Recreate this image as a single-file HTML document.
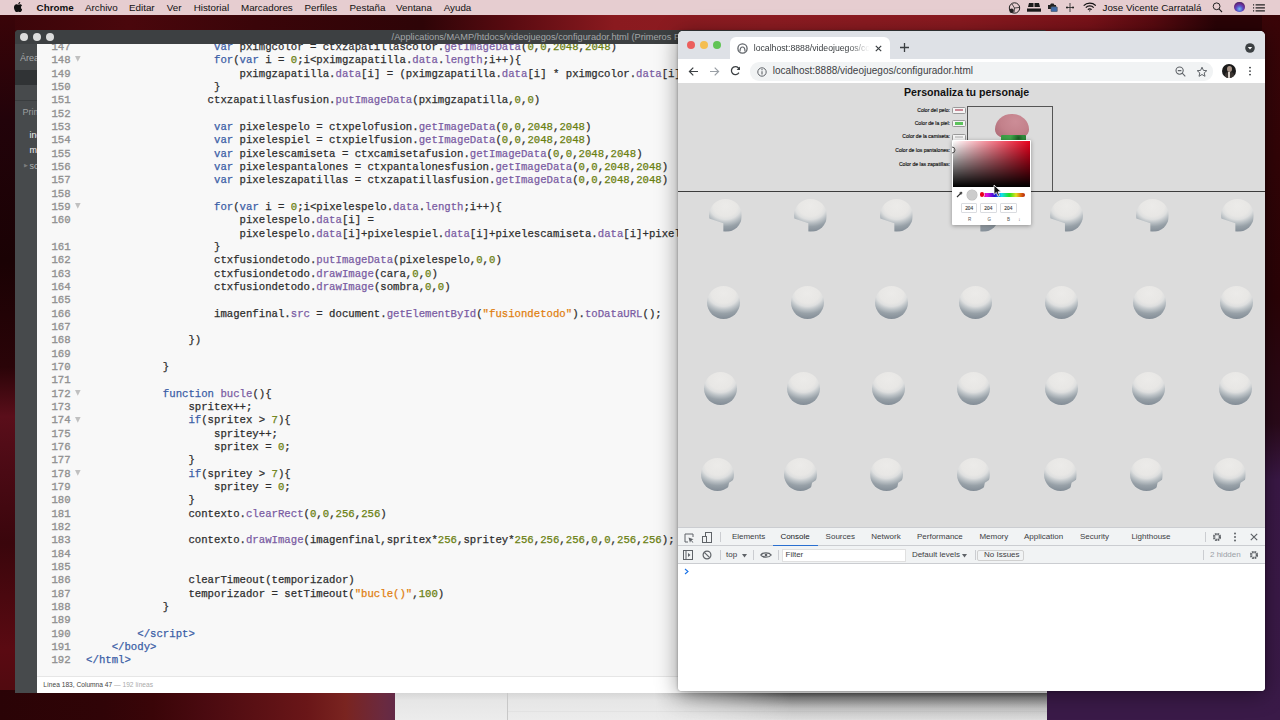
<!DOCTYPE html>
<html><head><meta charset="utf-8">
<style>
*{margin:0;padding:0;box-sizing:border-box}
html,body{width:1280px;height:720px;overflow:hidden;position:relative;font-family:"Liberation Sans",sans-serif}
body{background:#2a0306}
#desk-top{left:0;top:14px;width:1280px;height:17px;background:linear-gradient(90deg,#3a0509 0%,#4a070c 10%,#3a0509 20%,#2e0407 33%,#5a0b11 40%,#8a1a1f 48%,#8e1c22 60%,#8a1a20 75%,#7a1219 85%,#5a0a10 90%,#2a0306 95%,#2a0306 100%)}
#desk-left{left:0;top:14px;width:15px;height:706px;background:linear-gradient(180deg,#3a0408 0%,#22030a 15%,#1a0204 35%,#2a0408 50%,#5a0e1a 57%,#4a0a14 65%,#3a060c 75%,#5a0a12 90%,#4a0a0e 100%)}
.abs{position:absolute}
#desk-bottom{left:0;top:690px;width:1280px;height:30px;background:linear-gradient(90deg,#2a0306 0%,#300407 8%,#3a0508 12%,#4a0a10 16%,#5a1014 20%,#6a1618 24%,#7a2420 27%,#6a2a40 30%,#5a2a50 32%,#3a1a48 82%,#3a1a48 100%)}
#desk-right{left:1262px;top:14px;width:18px;height:706px;background:linear-gradient(180deg,#3a0508 0%,#2a0306 40%,#2a0a1a 58%,#3a1846 66%,#3a1a48 100%)}
#menubar{left:0;top:0;width:1280px;height:14.5px;background:#e6cdd0;font-size:9.8px;color:#111}
#menubar span{position:absolute;top:1.5px;white-space:nowrap}
/* editor */
#editor{left:15px;top:30px;width:1032px;height:663px;background:#46494b;border-radius:4px 4px 0 0;overflow:hidden}
#ed-title{left:0;top:0;width:1032px;height:14px;background:#3d4042}
.tl{position:absolute;width:8px;height:8px;border-radius:50%;background:#dcdcdc;top:3px}
#ed-side{left:0;top:14px;width:22px;height:649px;background:#474a4c}
#ed-code{left:22px;top:14px;width:1010px;height:632px;background:#f8f8f8;overflow:hidden}
#ed-status{left:22px;top:646px;width:1010px;height:17px;background:#fff;border-top:1px solid #e6e6e6}
#code{position:absolute;left:49.1px;top:-2.93px;font-family:"Liberation Mono",monospace;font-size:10.667px;line-height:13.333px;color:#2e2e2e;white-space:pre;-webkit-text-stroke:.25px}
#lnums{position:absolute;left:0;top:-2.93px;width:33.6px;text-align:right;font-family:"Liberation Mono",monospace;font-size:10.67px;line-height:13.333px;color:#929292;white-space:pre;-webkit-text-stroke:.35px}
i{font-style:normal}
.k{color:#3b5ea6}.p{color:#7a5ca3}.n{color:#6a8010}.s{color:#e08010}
/* browser */
#browser{left:678px;top:31px;width:587px;height:659.5px;background:#fff;border-radius:5px 5px 4px 4px;overflow:hidden;box-shadow:0 3px 22px rgba(0,0,0,.42),0 0 3px rgba(0,0,0,.35)}
#tabstrip{left:0;top:0;width:587px;height:27.5px;background:#dee1e6}
#tab{left:52px;top:6px;width:160px;height:22px;background:#fff;border-radius:6px 6px 0 0}
#toolbar{left:0;top:27.5px;width:587px;height:24.5px;background:#fff}
#omni{left:72px;top:3.5px;width:463px;height:18.5px;background:#f1f3f4;border-radius:9px}
#page{left:0;top:52px;width:587px;height:444.5px;background:#dcdcdc;overflow:hidden}
#devtools{left:0;top:496px;width:587px;height:163.5px;background:#fff;border-top:1px solid #cbcdd1}
#dt-tabs{left:0;top:0;width:587px;height:18.3px;background:#f1f3f4;border-bottom:1px solid #cbcdd1;font-size:8.5px;color:#333}
#dt-bar{left:0;top:18.3px;width:587px;height:17.3px;background:#f1f3f4;border-bottom:1px solid #cbcdd1;font-size:8.5px;color:#333}
.sph{position:absolute;width:33px;height:33px;border-radius:50%;background:radial-gradient(ellipse 95% 80% at 50% 22%,#ecebe9 0%,#e8e7e5 38%,#dedfdf 50%,#bcc2c6 62%,#98a1a8 77%,#808a94 100%)}

.lbl{position:absolute;right:315px;font-size:5.08px;line-height:7px;color:#111;white-space:nowrap;-webkit-text-stroke:.15px #111}
.sw{position:absolute;left:274px;width:14px;height:7px;background:#f4f4f4;border:1px solid #999;border-radius:1.5px;padding:1.2px 1.6px}
.sw i{display:block;width:100%;height:100%}
#picker{left:273.8px;top:57.4px;width:79.2px;height:84.6px;background:#fff;box-shadow:0 1px 4px rgba(0,0,0,.35);border-radius:1px}
.rgb{position:absolute;top:62.6px;width:16.7px;height:10px;border:1px solid #dadce0;border-radius:1px;font-size:4.8px;line-height:8px;padding-top:.6px;text-align:center;color:#333;-webkit-text-stroke:.1px #333}
.rl{position:absolute;top:76.3px;font-size:4.5px;color:#555}
.dtt{position:absolute;top:3.8px;font-size:8px;line-height:9px;color:#3c4043;white-space:nowrap}
.s1{clip-path:polygon(0 0,100% 0,100% 100%,45% 100%,45% 75%,0 60%)}
.s4{clip-path:polygon(0 0,100% 0,100% 65%,85% 75%,80% 100%,0 100%)}
#third{left:395px;top:690px;width:652px;height:30px;background:linear-gradient(180deg,#d0d0d0 0%,#e6e6e6 35%,#ececec 100%);overflow:hidden}
</style></head><body>
<div id="desk-top" class="abs"></div>
<div id="desk-left" class="abs"></div>
<div id="desk-bottom" class="abs"></div>
<div id="desk-right" class="abs"></div>
<div id="third" class="abs">
 <div class="abs" style="left:112px;top:0;width:1px;height:30px;background:#c8c8c8"></div>
 <div class="abs" style="left:113px;top:20.6px;width:540px;height:1px;background:#e2e2e2"></div>
 <div class="abs" style="left:260px;top:0;width:392px;height:30px;background:linear-gradient(180deg,rgba(40,40,40,.85) 0%,rgba(80,80,80,.6) 25%,rgba(110,110,110,.3) 60%,rgba(120,120,120,.12) 100%);-webkit-mask-image:linear-gradient(90deg,transparent 0%,#000 35%)"></div>
</div>

<div id="menubar" class="abs">
<svg class="abs" style="left:13.9px;top:1.8px" width="8.5" height="10" viewBox="0 0 170 200"><path fill="#111" d="M140 106c0-26 21-38 22-39-12-18-31-20-37-20-16-2-31 9-39 9-8 0-20-9-34-9C34 48 17 58 8 74c-18 32-5 79 13 105 9 13 19 27 32 26 13-1 18-8 33-8s20 8 33 8c14 0 23-13 31-26 10-15 14-29 14-30-1 0-24-9-24-43zM115 30c7-9 12-21 11-33-10 1-23 7-30 16-7 8-13 20-11 32 11 1 23-6 30-15z"/></svg>
<span style="left:36.6px;font-weight:bold">Chrome</span>
<span style="left:85px">Archivo</span>
<span style="left:129px">Editar</span>
<span style="left:166.7px">Ver</span>
<span style="left:193.7px">Historial</span>
<span style="left:241px">Marcadores</span>
<span style="left:304.5px">Perfiles</span>
<span style="left:349.5px">Pestaña</span>
<span style="left:396px">Ventana</span>
<span style="left:443.7px">Ayuda</span>
<span style="left:1102.5px">Jose Vicente Carratalá</span>
<svg class="abs" style="left:1008px;top:1.5px" width="13" height="12" viewBox="0 0 13 12"><circle cx="6.5" cy="6" r="5.2" fill="none" stroke="#222" stroke-width="1"/><circle cx="3.6" cy="8.8" r="2.2" fill="#222"/><path d="M6.5 6L4 2M6.5 6L11 5.5M6.5 6L6 10.5" stroke="#222" stroke-width=".8"/></svg>
<svg class="abs" style="left:1027.3px;top:3px" width="14" height="9" viewBox="0 0 14 9"><path d="M2 0H6.5V4H1ZM7.5 0H12L13 4H7.5Z" fill="#1a1a1a"/><rect x="0" y="5.5" width="14" height="3.2" fill="#1a1a1a"/></svg>
<svg class="abs" style="left:1047px;top:2.3px" width="10.5" height="10" viewBox="0 0 10.5 10"><path d="M1 3H3L4 1.5H6.5L7.5 3H9V7H1Z" fill="#222"/><rect x="4" y="4.8" width="6.3" height="5" rx=".8" fill="#3f6aa8" stroke="#555" stroke-width=".6"/></svg>
<svg class="abs" style="left:1066px;top:3px" width="8" height="9" viewBox="0 0 8 9"><path d="M4 0V9M0 4.5H8" stroke="#333" stroke-width=".9"/><circle cx="1" cy="4.5" r="1" fill="#222"/><circle cx="7" cy="4.5" r="1" fill="#222"/></svg>
<svg class="abs" style="left:1082.8px;top:2px" width="13.5" height="10" viewBox="0 0 13.5 10"><path d="M.7 3.6A8.5 8.5 0 0 1 12.8 3.6" fill="none" stroke="#111" stroke-width="1.3"/><path d="M2.8 5.6A5.5 5.5 0 0 1 10.7 5.6" fill="none" stroke="#111" stroke-width="1.3"/><path d="M4.9 7.6A2.6 2.6 0 0 1 8.6 7.6" fill="none" stroke="#111" stroke-width="1.3"/><path d="M5.8 8.6L6.75 9.8L7.7 8.6Z" fill="#111"/></svg>
<svg class="abs" style="left:1212px;top:2.3px" width="11" height="11" viewBox="0 0 11 11"><circle cx="4.6" cy="4.3" r="3.4" fill="none" stroke="#222" stroke-width="1"/><path d="M7 6.8L10 10" stroke="#222" stroke-width="1.1"/></svg>
<div class="abs" style="left:1234px;top:1.9px;width:10.6px;height:10.6px;border-radius:50%;background:radial-gradient(circle at 50% 70%,#6ac0f0 0,#5a50c8 35%,#6a2a8a 60%,#1a1a40 100%)"></div>
<svg class="abs" style="left:1252.8px;top:3.5px" width="12" height="8" viewBox="0 0 12 8"><path d="M0 .9H1.1M0 3.9H1.1M0 6.9H1.1" stroke="#222" stroke-width="1.1"/><path d="M2.6 .9H11.9M2.6 3.9H11.9M2.6 6.9H11.9" stroke="#222" stroke-width="1.1"/></svg>

</div>

<div id="editor" class="abs">
 <div id="ed-title" class="abs">
  <div class="tl" style="left:4.8px"></div><div class="tl" style="left:18px"></div><div class="tl" style="left:31px"></div>
  <span class="abs" style="left:376.6px;top:2px;font-size:9.22px;color:#a3a6a8;white-space:nowrap">/Applications/MAMP/htdocs/videojuegos/configurador.html (Primeros P</span>
 </div>
 <div id="ed-side" class="abs" style="overflow:hidden">
  <span class="abs" style="left:4.9px;top:9px;font-size:9px;color:#a8aaab;white-space:nowrap">Área de trabajo</span>
  <div class="abs" style="left:0;top:26.2px;width:22px;height:14.6px;background:#303335"></div>
  <div class="abs" style="left:0;top:55.8px;width:22px;height:1px;background:#3a3d3f"></div>
  <span class="abs" style="left:7.6px;top:62.5px;font-size:9px;color:#9c9e9f;white-space:nowrap">Primeros pasos</span>
  <span class="abs" style="left:14.5px;top:85.5px;font-size:9px;color:#f2f2f2;white-space:nowrap">index.html</span>
  <span class="abs" style="left:14.5px;top:100.8px;font-size:9px;color:#f2f2f2;white-space:nowrap">main.css</span>
  <span class="abs" style="left:8.5px;top:118px;font-size:5px;color:#7a7c7d">&#9654;</span>
  <span class="abs" style="left:14.5px;top:116.5px;font-size:9px;color:#b0b2b3;white-space:nowrap">scripts</span>
 </div>
 <div id="ed-code" class="abs">
  <div id="lnums">147
148
149
150
151
152
153
154
155
156
157
158
159
160

161
162
163
164
165
166
167
168
169
170
171
172
173
174
175
176
177
178
179
180
181
182
183
184
185
186
187
188
189
190
191
192</div>
  <svg class="abs" style="left:37.7px;top:12.40px" width="6" height="6" viewBox="0 0 6 6"><path d="M0 0H5.6L2.8 5.8Z" fill="#c0c0c0"/></svg><svg class="abs" style="left:37.7px;top:159.14px" width="6" height="6" viewBox="0 0 6 6"><path d="M0 0H5.6L2.8 5.8Z" fill="#c0c0c0"/></svg><svg class="abs" style="left:37.7px;top:345.90px" width="6" height="6" viewBox="0 0 6 6"><path d="M0 0H5.6L2.8 5.8Z" fill="#c0c0c0"/></svg><svg class="abs" style="left:37.7px;top:372.58px" width="6" height="6" viewBox="0 0 6 6"><path d="M0 0H5.6L2.8 5.8Z" fill="#c0c0c0"/></svg><svg class="abs" style="left:37.7px;top:425.94px" width="6" height="6" viewBox="0 0 6 6"><path d="M0 0H5.6L2.8 5.8Z" fill="#c0c0c0"/></svg>
  <div id="code">                    <i class="k">var</i> pximgcolor = ctxzapatillascolor.<i class="p">getImageData</i>(<i class="n">0</i>,<i class="n">0</i>,<i class="n">2048</i>,<i class="n">2048</i>)
                    <i class="k">for</i>(<i class="k">var</i> i = <i class="n">0</i>;i&lt;pximgzapatilla.<i class="p">data</i>.<i class="p">length</i>;i++){
                        pximgzapatilla.<i class="p">data</i>[i] = (pximgzapatilla.<i class="p">data</i>[i] * pximgcolor.<i class="p">data</i>[i])/<i class="n">255</i>;
                    }
                   ctxzapatillasfusion.<i class="p">putImageData</i>(pximgzapatilla,<i class="n">0</i>,<i class="n">0</i>)

                    <i class="k">var</i> pixelespelo = ctxpelofusion.<i class="p">getImageData</i>(<i class="n">0</i>,<i class="n">0</i>,<i class="n">2048</i>,<i class="n">2048</i>)
                    <i class="k">var</i> pixelespiel = ctxpielfusion.<i class="p">getImageData</i>(<i class="n">0</i>,<i class="n">0</i>,<i class="n">2048</i>,<i class="n">2048</i>)
                    <i class="k">var</i> pixelescamiseta = ctxcamisetafusion.<i class="p">getImageData</i>(<i class="n">0</i>,<i class="n">0</i>,<i class="n">2048</i>,<i class="n">2048</i>)
                    <i class="k">var</i> pixelespantalones = ctxpantalonesfusion.<i class="p">getImageData</i>(<i class="n">0</i>,<i class="n">0</i>,<i class="n">2048</i>,<i class="n">2048</i>)
                    <i class="k">var</i> pixeleszapatillas = ctxzapatillasfusion.<i class="p">getImageData</i>(<i class="n">0</i>,<i class="n">0</i>,<i class="n">2048</i>,<i class="n">2048</i>)

                    <i class="k">for</i>(<i class="k">var</i> i = <i class="n">0</i>;i&lt;pixelespelo.<i class="p">data</i>.<i class="p">length</i>;i++){
                        pixelespelo.<i class="p">data</i>[i] =
                        pixelespelo.<i class="p">data</i>[i]+pixelespiel.<i class="p">data</i>[i]+pixelescamiseta.<i class="p">data</i>[i]+pixelespantalones.<i class="p">data</i>[i]
                    }
                    ctxfusiondetodo.<i class="p">putImageData</i>(pixelespelo,<i class="n">0</i>,<i class="n">0</i>)
                    ctxfusiondetodo.<i class="p">drawImage</i>(cara,<i class="n">0</i>,<i class="n">0</i>)
                    ctxfusiondetodo.<i class="p">drawImage</i>(sombra,<i class="n">0</i>,<i class="n">0</i>)

                    imagenfinal.<i class="p">src</i> = document.<i class="p">getElementById</i>(<i class="s">&quot;fusiondetodo&quot;</i>).<i class="p">toDataURL</i>();

                })

            }

            <i class="k">function</i> <i class="p">bucle</i>(){
                spritex++;
                <i class="k">if</i>(spritex &gt; <i class="n">7</i>){
                    spritey++;
                    spritex = <i class="n">0</i>;
                }
                <i class="k">if</i>(spritey &gt; <i class="n">7</i>){
                    spritey = <i class="n">0</i>;
                }
                contexto.<i class="p">clearRect</i>(<i class="n">0</i>,<i class="n">0</i>,<i class="n">256</i>,<i class="n">256</i>)

                contexto.<i class="p">drawImage</i>(imagenfinal,spritex*<i class="n">256</i>,spritey*<i class="n">256</i>,<i class="n">256</i>,<i class="n">256</i>,<i class="n">0</i>,<i class="n">0</i>,<i class="n">256</i>,<i class="n">256</i>);


                clearTimeout(temporizador)
                temporizador = setTimeout(<i class="s">&quot;bucle()&quot;</i>,<i class="n">100</i>)
            }

        <i class="k">&lt;/script&gt;</i>
    <i class="k">&lt;/body&gt;</i>
<i class="k">&lt;/html&gt;</i></div>
 </div>
 <div id="ed-status" class="abs"><span class="abs" style="left:6.3px;top:3.5px;font-size:6.64px;color:#444;white-space:nowrap">Línea 183, Columna 47 <span style="color:#aaa">— 192 líneas</span></span></div>
</div>

<div id="browser" class="abs">
 <div id="tabstrip" class="abs">
  <div class="tl" style="left:8.8px;top:10px;background:#ec5f5d"></div>
  <div class="tl" style="left:21.9px;top:10px;background:#f4be4f"></div>
  <div class="tl" style="left:35.3px;top:10px;background:#61c454"></div>
  <div id="tab" class="abs">
   <svg class="abs" style="left:7px;top:5.5px" width="11" height="11" viewBox="0 0 11 11"><circle cx="5.5" cy="5.5" r="4.6" fill="none" stroke="#5f6368" stroke-width="1.3"/><path d="M3 8.5 C3 5.5 4 4 5.5 4 C7 4 8 5.5 8 8.5" fill="none" stroke="#5f6368" stroke-width="1.2"/></svg>
   <span class="abs" style="left:23.75px;top:5px;font-size:8.7px;line-height:12px;color:#3c4043;white-space:nowrap;width:118px;overflow:hidden;-webkit-mask-image:linear-gradient(90deg,#000 80%,transparent 98%)">localhost:8888/videojuegos/configurador.html</span>
   <svg class="abs" style="left:145px;top:7.5px" width="7" height="7" viewBox="0 0 7 7"><path d="M.8 .8L6.2 6.2M6.2 .8L.8 6.2" stroke="#3c4043" stroke-width="1.2"/></svg>
  </div>
  <svg class="abs" style="left:222px;top:12px" width="9" height="9" viewBox="0 0 9 9"><path d="M4.5 0V9M0 4.5H9" stroke="#3c4043" stroke-width="1.3"/></svg>
  <svg class="abs" style="left:567px;top:12px" width="10" height="10" viewBox="0 0 10 10"><circle cx="5" cy="5" r="4.8" fill="#3c4043"/><path d="M2.8 4H7.2L5 6.6Z" fill="#fff"/></svg>
 </div>
 <div id="toolbar" class="abs">
  <svg class="abs" style="left:9.5px;top:7px" width="11" height="11" viewBox="0 0 11 11"><path d="M10 5.5H1.5M5.3 1.6L1.4 5.5L5.3 9.4" fill="none" stroke="#3c4043" stroke-width="1.2"/></svg>
  <svg class="abs" style="left:30.5px;top:7px" width="11" height="11" viewBox="0 0 11 11"><path d="M1 5.5H9.5M5.7 1.6L9.6 5.5L5.7 9.4" fill="none" stroke="#9aa0a6" stroke-width="1.2"/></svg>
  <svg class="abs" style="left:51.5px;top:6.6px" width="11" height="11" viewBox="0 0 11 11"><path d="M9.3 4.6A4 4 0 1 0 8.9 7.6" fill="none" stroke="#3c4043" stroke-width="1.3"/><path d="M6.6 4.9H10V1.5Z" fill="#3c4043"/></svg>
  <div id="omni" class="abs">
   <svg class="abs" style="left:7px;top:4.5px" width="10" height="10" viewBox="0 0 10 10"><circle cx="5" cy="5" r="4.2" fill="none" stroke="#5f6368" stroke-width="1"/><path d="M5 4.2V7.6" stroke="#5f6368" stroke-width="1.1"/><circle cx="5" cy="2.7" r=".65" fill="#5f6368"/></svg>
   <span class="abs" style="left:22.8px;top:3px;font-size:10px;color:#3c4043;white-space:nowrap">localhost:8888/videojuegos/configurador.html</span>
   <svg class="abs" style="left:424.8px;top:4.2px" width="11" height="11" viewBox="0 0 11 11"><circle cx="4.6" cy="4.6" r="3.6" fill="none" stroke="#5f6368" stroke-width="1.1"/><path d="M7.2 7.2L10.3 10.3M2.8 4.6H6.4" stroke="#5f6368" stroke-width="1.1"/></svg>
   <svg class="abs" style="left:445.8px;top:3.5px" width="12" height="12" viewBox="0 0 12 12"><path d="M6 1.2L7.4 4.4L10.8 4.7L8.2 6.9L9 10.3L6 8.5L3 10.3L3.8 6.9L1.2 4.7L4.6 4.4Z" fill="none" stroke="#5f6368" stroke-width="1"/></svg>
  </div>
  <div class="abs" style="left:543.6px;top:5.5px;width:14px;height:14px;border-radius:50%;overflow:hidden;background:#1a1a1a"><div class="abs" style="left:5px;top:2px;width:5px;height:6px;border-radius:50%;background:#a89488"></div><div class="abs" style="left:3px;top:7.5px;width:9px;height:8px;border-radius:40% 40% 0 0;background:#3a3430"></div><div class="abs" style="left:6.5px;top:8px;width:2px;height:6px;background:#d8d0c8"></div></div>
  <svg class="abs" style="left:570.2px;top:6px" width="4" height="12" viewBox="0 0 4 12"><circle cx="2" cy="2.6" r=".95" fill="#3c4043"/><circle cx="2" cy="6.1" r=".95" fill="#3c4043"/><circle cx="2" cy="9.6" r=".95" fill="#3c4043"/></svg>
 </div>
 <div id="page" class="abs">
  <span class="abs" style="left:226px;top:3px;font-size:10.64px;line-height:12px;font-weight:bold;color:#111;white-space:nowrap">Personaliza tu personaje</span>
  <div class="lbl" style="top:23.5px">Color del pelo:</div>
  <div class="lbl" style="top:36.7px">Color de la piel:</div>
  <div class="lbl" style="top:50.3px">Color de la camiseta:</div>
  <div class="lbl" style="top:63.5px">Color de los pantalones:</div>
  <div class="lbl" style="top:77.5px">Color de las zapatillas:</div>
  <div class="sw" style="top:23.6px"><i style="background:#c98a96"></i></div>
  <div class="sw" style="top:37px"><i style="background:#5cc25c"></i></div>
  <div class="sw" style="top:50.5px"><i style="background:#cfcfcf"></i></div>
  <div class="abs" style="left:288.6px;top:23.3px;width:86.4px;height:86px;border:1px solid #555;border-bottom:none"></div>
  <div class="abs" style="left:317px;top:31.4px;width:33.5px;height:24.5px;border-radius:50% 50% 42% 42% / 62% 62% 38% 38%;background:radial-gradient(ellipse at 60% 30%,#cc8d97 0,#c3818b 50%,#a86672 100%)"></div>
  <div class="abs" style="left:323px;top:52px;width:25px;height:6px;background:radial-gradient(circle at 70% 50%,#1f5a25 0,#2f8a3a 25%,transparent 45%),linear-gradient(90deg,#3a9a44,#45aa4e 60%,#2c7f36);border-radius:1px"></div>
  <div class="abs" style="left:0;top:107.6px;width:587px;height:1.3px;background:#3c3c3c"></div>
  <div class="sph s1" style="left:30.5px;top:115.5px"></div>
  <div class="sph s1" style="left:115.5px;top:115.5px"></div>
  <div class="sph s1" style="left:201.5px;top:115.5px"></div>
  <div class="sph s1" style="left:287.5px;top:115.5px"></div>
  <div class="sph s1" style="left:372.1px;top:115.5px"></div>
  <div class="sph s1" style="left:457.5px;top:115.5px"></div>
  <div class="sph s1" style="left:542.5px;top:115.5px"></div>
  <div class="sph" style="left:28.5px;top:203.0px"></div>
  <div class="sph" style="left:113.0px;top:203.0px"></div>
  <div class="sph" style="left:196.5px;top:203.0px"></div>
  <div class="sph" style="left:280.5px;top:203.0px"></div>
  <div class="sph" style="left:367.2px;top:203.0px"></div>
  <div class="sph" style="left:454.5px;top:203.0px"></div>
  <div class="sph" style="left:541.5px;top:203.0px"></div>
  <div class="sph" style="left:26.0px;top:288.8px"></div>
  <div class="sph" style="left:108.5px;top:288.8px"></div>
  <div class="sph" style="left:193.5px;top:288.8px"></div>
  <div class="sph" style="left:279.4px;top:288.8px"></div>
  <div class="sph" style="left:367.0px;top:288.8px"></div>
  <div class="sph" style="left:454.1px;top:288.8px"></div>
  <div class="sph" style="left:540.5px;top:288.8px"></div>
  <div class="sph s4" style="left:23.0px;top:375.0px"></div>
  <div class="sph s4" style="left:106.0px;top:375.0px"></div>
  <div class="sph s4" style="left:192.2px;top:375.0px"></div>
  <div class="sph s4" style="left:278.8px;top:375.0px"></div>
  <div class="sph s4" style="left:365.5px;top:375.0px"></div>
  <div class="sph s4" style="left:451.5px;top:375.0px"></div>
  <div class="sph s4" style="left:534.5px;top:375.0px"></div>
  <div id="picker" class="abs">
   <div class="abs" style="left:1px;top:.6px;width:77.4px;height:46.3px;background:linear-gradient(180deg,rgba(0,0,0,0) 0%,#000 100%),linear-gradient(90deg,#fff 0%,#e8001c 100%)"></div>
   <svg class="abs" style="left:4.5px;top:50.7px" width="7" height="7" viewBox="0 0 7 7"><path d="M1 6L4.2 2.8M3.6 1.6L5.4 3.4M4.6 0.8L6.2 2.4" stroke="#333" stroke-width="1.2"/></svg>
   <div class="abs" style="left:15.2px;top:49.2px;width:10px;height:10px;border-radius:50%;background:#cccccc;box-shadow:0 0 0 .5px #bbb"></div>
   <div class="abs" style="left:28.2px;top:52.3px;width:45.4px;height:4px;border-radius:2px;background:linear-gradient(90deg,#e00018 0%,#e010e0 15%,#2010d0 33%,#10e0f0 48%,#20e020 65%,#e0e020 80%,#e07010 90%,#b02010 100%)"></div>
   <div class="abs" style="left:28.5px;top:52.1px;width:4.2px;height:4.2px;border-radius:50%;background:#e8001c;box-shadow:0 0 0 .6px #fff"></div>
   <div class="rgb" style="left:9px">204</div><div class="rgb" style="left:28.2px">204</div><div class="rgb" style="left:48.2px">204</div>
   <span class="rl" style="left:16.2px">R</span><span class="rl" style="left:35.7px">G</span><span class="rl" style="left:55.2px">B</span><span class="rl" style="left:66.5px">&#8597;</span>
   <svg class="abs" style="left:-1px;top:5.5px" width="5" height="8" viewBox="0 0 5 8"><path d="M1 1A3 3 0 0 1 1 7" fill="none" stroke="#444" stroke-width=".9"/></svg>
  </div>
  <svg class="abs" style="left:315px;top:100.5px" width="9" height="13" viewBox="0 0 9 13"><path d="M1 1V10.5L3.3 8.4L5 12.2L6.6 11.5L5 7.8H8.2Z" fill="#111" stroke="#fff" stroke-width=".8"/></svg>

 </div>
 <div id="devtools" class="abs">
  <div id="dt-tabs" class="abs">
   <svg class="abs" style="left:5.5px;top:4.5px" width="10" height="10" viewBox="0 0 10 10"><path d="M4 9H1V1H9V4" fill="none" stroke="#5f6368" stroke-width="1"/><path d="M4.5 4.5L9.5 6.3L7.4 7.2L9.4 9.2L8.8 9.8L6.9 7.8L6 9.8Z" fill="#5f6368"/></svg>
   <svg class="abs" style="left:23.5px;top:3.5px" width="10" height="11" viewBox="0 0 10 11"><rect x="3.5" y=".5" width="6" height="10" fill="none" stroke="#5f6368" stroke-width="1"/><rect x=".5" y="4.5" width="4" height="6" fill="#f1f3f4" stroke="#5f6368" stroke-width="1"/></svg>
   <div class="abs" style="left:41.5px;top:4px;width:1px;height:10px;background:#cbcdd1"></div>
   <span class="dtt" style="left:53.9px">Elements</span>
   <span class="dtt" style="left:102.4px;color:#202124">Console</span>
   <span class="dtt" style="left:147.6px">Sources</span>
   <span class="dtt" style="left:193.3px">Network</span>
   <span class="dtt" style="left:239px">Performance</span>
   <span class="dtt" style="left:301.4px">Memory</span>
   <span class="dtt" style="left:346px">Application</span>
   <span class="dtt" style="left:402px">Security</span>
   <span class="dtt" style="left:453.4px">Lighthouse</span>
   <div class="abs" style="left:94.9px;top:16.9px;width:45px;height:1.4px;background:#2a6fd0"></div>
   <div class="abs" style="left:526.5px;top:4px;width:1px;height:10px;background:#cbcdd1"></div>
   <svg class="abs" style="left:533.7px;top:4px" width="10" height="10" viewBox="0 0 10 10"><circle cx="5" cy="5" r="2.9" fill="none" stroke="#5f6368" stroke-width="2.4" stroke-dasharray="1.6 .68"/><circle cx="5" cy="5" r="1.4" fill="#f1f3f4"/></svg>
   <svg class="abs" style="left:555.4px;top:4px" width="4" height="10" viewBox="0 0 4 10"><circle cx="2" cy="1.6" r="1" fill="#5f6368"/><circle cx="2" cy="5" r="1" fill="#5f6368"/><circle cx="2" cy="8.4" r="1" fill="#5f6368"/></svg>
   <svg class="abs" style="left:571.7px;top:5px" width="8" height="8" viewBox="0 0 8 8"><path d="M.8 .8L7.2 7.2M7.2 .8L.8 7.2" stroke="#5f6368" stroke-width="1.2"/></svg>
  </div>
  <div id="dt-bar" class="abs">
   <svg class="abs" style="left:5px;top:4px" width="10" height="10" viewBox="0 0 10 10"><rect x=".5" y=".5" width="9" height="9" fill="none" stroke="#5f6368" stroke-width="1"/><path d="M3 .5V9.5" stroke="#5f6368"/><path d="M5 3L7.5 5L5 7Z" fill="#5f6368"/></svg>
   <svg class="abs" style="left:24.3px;top:4px" width="10" height="10" viewBox="0 0 10 10"><circle cx="5" cy="5" r="3.9" fill="none" stroke="#5f6368" stroke-width="1.2"/><path d="M2.3 2.3L7.7 7.7" stroke="#5f6368" stroke-width="1.2"/></svg>
   <div class="abs" style="left:41.7px;top:4px;width:1px;height:10px;background:#cbcdd1"></div>
   <span class="dtt" style="left:48px;top:4px">top</span>
   <svg class="abs" style="left:63.5px;top:7.5px" width="5" height="4" viewBox="0 0 5 4"><path d="M0 0H5L2.5 3.5Z" fill="#5f6368"/></svg>
   <div class="abs" style="left:75px;top:4px;width:1px;height:10px;background:#cbcdd1"></div>
   <svg class="abs" style="left:81.5px;top:5px" width="12" height="8" viewBox="0 0 12 8"><path d="M.8 4C2.8 1.1 9.2 1.1 11.2 4C9.2 6.9 2.8 6.9 .8 4Z" fill="none" stroke="#5f6368" stroke-width="1.3"/><circle cx="6" cy="4" r="1.3" fill="#5f6368"/></svg>
   <div class="abs" style="left:99.6px;top:4px;width:1px;height:10px;background:#cbcdd1"></div>
   <div class="abs" style="left:104.3px;top:3.2px;width:124.2px;height:12.9px;background:#fff;border:1px solid #e0e0e0"></div>
   <span class="dtt" style="left:107.5px;top:4px;color:#3c4043">Filter</span>
   <span class="dtt" style="left:233.9px;top:4px">Default levels</span>
   <svg class="abs" style="left:284px;top:7.5px" width="5" height="4" viewBox="0 0 5 4"><path d="M0 0H5L2.5 3.5Z" fill="#5f6368"/></svg>
   <div class="abs" style="left:296.5px;top:4px;width:1px;height:10px;background:#cbcdd1"></div>
   <div class="abs" style="left:299.4px;top:3.5px;width:46.3px;height:11.4px;border:1px solid #d0d0d0;border-radius:2px;background:#f1f3f4"></div>
   <span class="dtt" style="left:306px;top:4px">No Issues</span>
   <div class="abs" style="left:525px;top:4px;width:1px;height:10px;background:#cbcdd1"></div>
   <span class="dtt" style="left:532px;top:4px;color:#9aa0a6">2 hidden</span>
   <svg class="abs" style="left:570.7px;top:4px" width="10" height="10" viewBox="0 0 10 10"><circle cx="5" cy="5" r="2.9" fill="none" stroke="#5f6368" stroke-width="2.4" stroke-dasharray="1.6 .68"/><circle cx="5" cy="5" r="1.4" fill="#f1f3f4"/></svg>
  </div>
  <svg class="abs" style="left:6px;top:39.5px" width="5" height="7" viewBox="0 0 5 7"><path d="M1 1L4 3.5L1 6" fill="none" stroke="#1a73e8" stroke-width="1.1"/></svg>

 </div>
</div>
</body></html>
